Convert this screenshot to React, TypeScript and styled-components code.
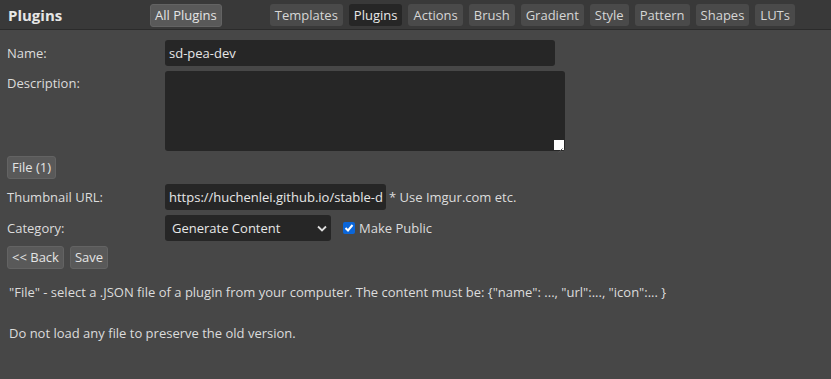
import React from "react";
import styled, { createGlobalStyle } from "styled-components";

const Global = createGlobalStyle`
  html, body {
    margin: 0;
    padding: 0;
    background: #474747;
    color: #dcdcdc;
    font-family: "Open Sans", "Noto Sans", sans-serif;
    font-size: 13px;
  }
`;

const Page = styled.div`
  width: 831px;
  height: 379px;
  background: #474747;
`;

const Header = styled.div`
  display: flex;
  align-items: center;
  height: 30px;
  background: #393939;
  border-bottom: 1px solid #2b2b2b;
  padding: 0 8px;
  box-sizing: border-box;
`;

const Title = styled.div`
  font-size: 15px;
  font-weight: 700;
  color: #e6e6e6;
  width: 142px;
`;

const Tabs = styled.div`
  display: flex;
  gap: 6px;
  margin-left: 48px;
`;

const Tab = styled.div<{ $active?: boolean }>`
  height: 22px;
  line-height: 22px;
  padding: 0 5px;
  border-radius: 3px;
  background: ${(p) => (p.$active ? "#262626" : "#4a4a4a")};
  color: ${(p) => (p.$active ? "#e8e8e8" : "#d6d6d6")};
  font-size: 13px;
`;

const Button = styled.div`
  display: inline-block;
  height: 21px;
  line-height: 21px;
  padding: 0 4px;
  border-radius: 3px;
  background: #595959;
  border: 1px solid #636363;
  color: #e4e4e4;
  font-size: 13px;
`;

const AllButton = styled(Button)`
  margin-top: 1px;
`;

const Form = styled.div`
  padding: 10px 7px 0;
`;

const Row = styled.div<{ $top?: boolean }>`
  display: flex;
  align-items: ${(p) => (p.$top ? "flex-start" : "center")};
  margin-bottom: 5px;
`;

const Label = styled.div<{ $top?: boolean }>`
  width: 158px;
  flex-shrink: 0;
  padding-top: ${(p) => (p.$top ? "3px" : "0")};
  color: #dcdcdc;
`;

const Field = styled.div`
  box-sizing: border-box;
  height: 26px;
  line-height: 26px;
  padding: 0 4px;
  background: #262626;
  border-radius: 3px;
  color: #e6e6e6;
  white-space: nowrap;
  overflow: hidden;
`;

const TextArea = styled.div`
  position: relative;
  box-sizing: border-box;
  width: 400px;
  height: 80px;
  background: #262626;
  border-radius: 3px;
`;

const Grip = styled.div`
  position: absolute;
  right: 1px;
  bottom: 1px;
  width: 10px;
  height: 10px;
  background: #fff;
`;

const Select = styled(Field)`
  display: flex;
  justify-content: space-between;
  align-items: center;
  padding: 0 4px 0 7px;
`;

const Note = styled.span`
  margin-left: 3px;
  color: #dcdcdc;
`;

const Check = styled.div`
  display: flex;
  align-items: center;
  gap: 4px;
  margin-left: 12px;
`;

const Box = styled.div`
  width: 12px;
  height: 12px;
  background: #0b66d9;
  border-radius: 2px;
  display: flex;
  align-items: center;
  justify-content: center;
`;

const Buttons = styled.div`
  display: flex;
  gap: 6px;
`;

const Info = styled.p`
  margin: 0;
  padding-left: 2px;
  color: #dcdcdc;
`;

const Infos = styled.div`
  display: flex;
  flex-direction: column;
  gap: 23px;
  margin-top: 14px;
`;

export default function App() {
  const tabs = ["Templates", "Plugins", "Actions", "Brush", "Gradient", "Style", "Pattern", "Shapes", "LUTs"];
  return (
    <Page>
      <Global />
      <Header>
        <Title>Plugins</Title>
        <AllButton>All Plugins</AllButton>
        <Tabs>
          {tabs.map((t) => (
            <Tab key={t} $active={t === "Plugins"}>
              {t}
            </Tab>
          ))}
        </Tabs>
      </Header>
      <Form>
        <Row>
          <Label>Name:</Label>
          <Field style={{ width: 390 }}>sd-pea-dev</Field>
        </Row>
        <Row $top>
          <Label $top>Description:</Label>
          <TextArea>
            <Grip>
              <svg width="10" height="10" viewBox="0 0 10 10">
                <path d="M8.5 4.5 L4.5 8.5 M8.5 7 L7 8.5" stroke="#555" strokeWidth="1" />
              </svg>
            </Grip>
          </TextArea>
        </Row>
        <Row>
          <Button>File (1)</Button>
        </Row>
        <Row>
          <Label>Thumbnail URL:</Label>
          <Field style={{ width: 221 }}>https://huchenlei.github.io/stable-d</Field>
          <Note>* Use Imgur.com etc.</Note>
        </Row>
        <Row>
          <Label>Category:</Label>
          <Select style={{ width: 166 }}>
            <span>Generate Content</span>
            <svg width="10" height="7" viewBox="0 0 10 7">
              <path d="M1 1.5 L5 5.5 L9 1.5" fill="none" stroke="#ddd" strokeWidth="1.8" />
            </svg>
          </Select>
          <Check>
            <Box>
              <svg width="10" height="10" viewBox="0 0 10 10">
                <path d="M1.5 5 L4 7.5 L8.5 2" fill="none" stroke="#fff" strokeWidth="2" />
              </svg>
            </Box>
            <span>Make Public</span>
          </Check>
        </Row>
        <Buttons>
          <Button>&lt;&lt; Back</Button>
          <Button>Save</Button>
        </Buttons>
        <Infos>
          <Info>
            "File" - select a .JSON file of a plugin from your computer. The content must be: {'{"name": ..., "url":..., "icon":... }'}
          </Info>
          <Info>Do not load any file to preserve the old version.</Info>
        </Infos>
      </Form>
    </Page>
  );
}
